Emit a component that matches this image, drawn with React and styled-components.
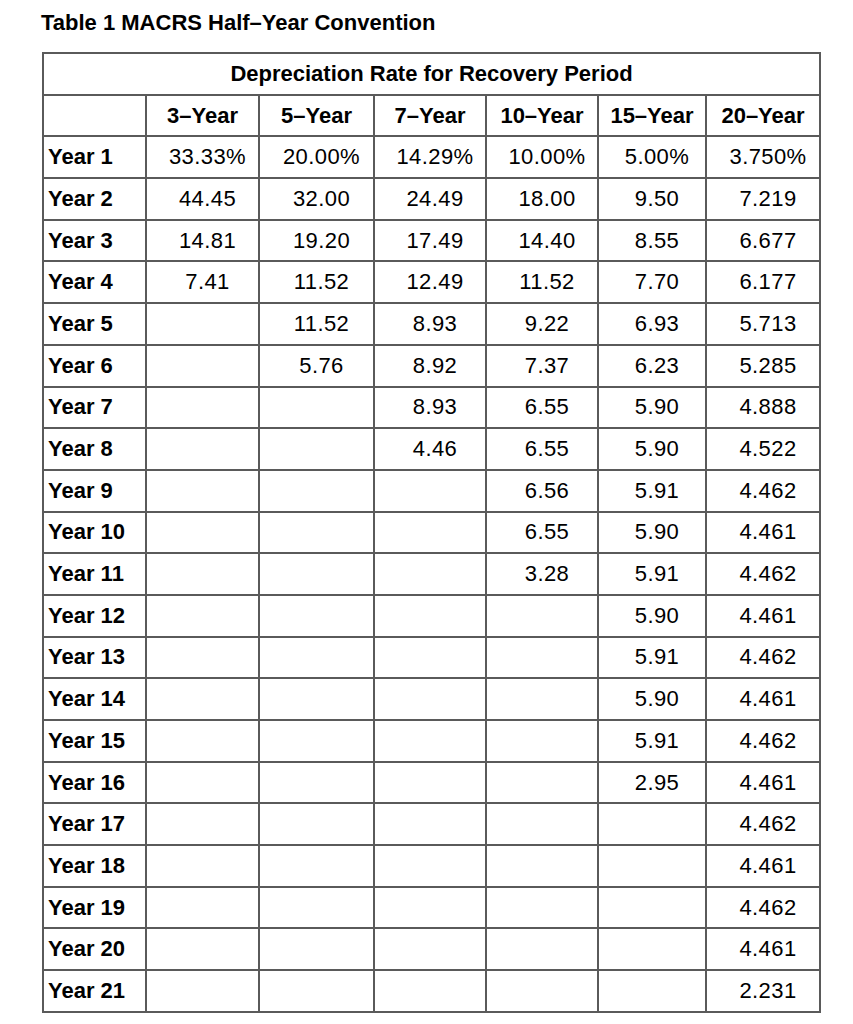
import React from "react";
import styled, { createGlobalStyle } from "styled-components";

const Global = createGlobalStyle`
  html, body { margin: 0; padding: 0; background: #fff; }
  body { font-family: "Liberation Sans", Arial, sans-serif; color: #000; }
`;

const Page = styled.div`
  padding: 8px 0 0 41px;
`;

const Title = styled.h1`
  margin: 0 0 14px 0;
  font-size: 22px;
  line-height: 30px;
  font-weight: 700;
`;

const Table = styled.table`
  border-collapse: collapse;
  table-layout: fixed;
  width: 777px;
  margin-left: 1px;
`;

const Row = styled.tr`
  height: 41.7px;
`;

const Cell = styled.td`
  border: 2px solid #5a5a5a;
  padding: 0 4px;
  font-size: 22px;
  white-space: nowrap;
  text-align: ${(p) => (p.$label ? "left" : "center")};
  font-weight: ${(p) => (p.$label ? 700 : 400)};
  padding-left: ${(p) => (p.$label ? "4px" : "14px")};
  letter-spacing: ${(p) => (p.$label ? "0" : "0.4px")};
`;

const HeadCell = styled.th`
  border: 2px solid #5a5a5a;
  padding: 0 4px;
  font-size: 22px;
  font-weight: 700;
  text-align: center;
  white-space: nowrap;
`;

const widths = [103, 113, 115, 112, 112, 108, 114];
const periods = ["3–Year", "5–Year", "7–Year", "10–Year", "15–Year", "20–Year"];

const data = [
  ["33.33%", "20.00%", "14.29%", "10.00%", "5.00%", "3.750%"],
  ["44.45", "32.00", "24.49", "18.00", "9.50", "7.219"],
  ["14.81", "19.20", "17.49", "14.40", "8.55", "6.677"],
  ["7.41", "11.52", "12.49", "11.52", "7.70", "6.177"],
  ["", "11.52", "8.93", "9.22", "6.93", "5.713"],
  ["", "5.76", "8.92", "7.37", "6.23", "5.285"],
  ["", "", "8.93", "6.55", "5.90", "4.888"],
  ["", "", "4.46", "6.55", "5.90", "4.522"],
  ["", "", "", "6.56", "5.91", "4.462"],
  ["", "", "", "6.55", "5.90", "4.461"],
  ["", "", "", "3.28", "5.91", "4.462"],
  ["", "", "", "", "5.90", "4.461"],
  ["", "", "", "", "5.91", "4.462"],
  ["", "", "", "", "5.90", "4.461"],
  ["", "", "", "", "5.91", "4.462"],
  ["", "", "", "", "2.95", "4.461"],
  ["", "", "", "", "", "4.462"],
  ["", "", "", "", "", "4.461"],
  ["", "", "", "", "", "4.462"],
  ["", "", "", "", "", "4.461"],
  ["", "", "", "", "", "2.231"],
];

export default function App() {
  return (
    <>
      <Global />
      <Page>
        <Title>Table 1 MACRS Half–Year Convention</Title>
        <Table>
          <colgroup>
            {widths.map((w, i) => (
              <col key={i} style={{ width: w }} />
            ))}
          </colgroup>
          <thead>
            <Row>
              <HeadCell colSpan={7}>Depreciation Rate for Recovery Period</HeadCell>
            </Row>
            <Row>
              <HeadCell />
              {periods.map((p) => (
                <HeadCell key={p}>{p}</HeadCell>
              ))}
            </Row>
          </thead>
          <tbody>
            {data.map((r, i) => (
              <Row key={i}>
                <Cell $label>Year {i + 1}</Cell>
                {r.map((v, j) => (
                  <Cell key={j}>{v}</Cell>
                ))}
              </Row>
            ))}
          </tbody>
        </Table>
      </Page>
    </>
  );
}
